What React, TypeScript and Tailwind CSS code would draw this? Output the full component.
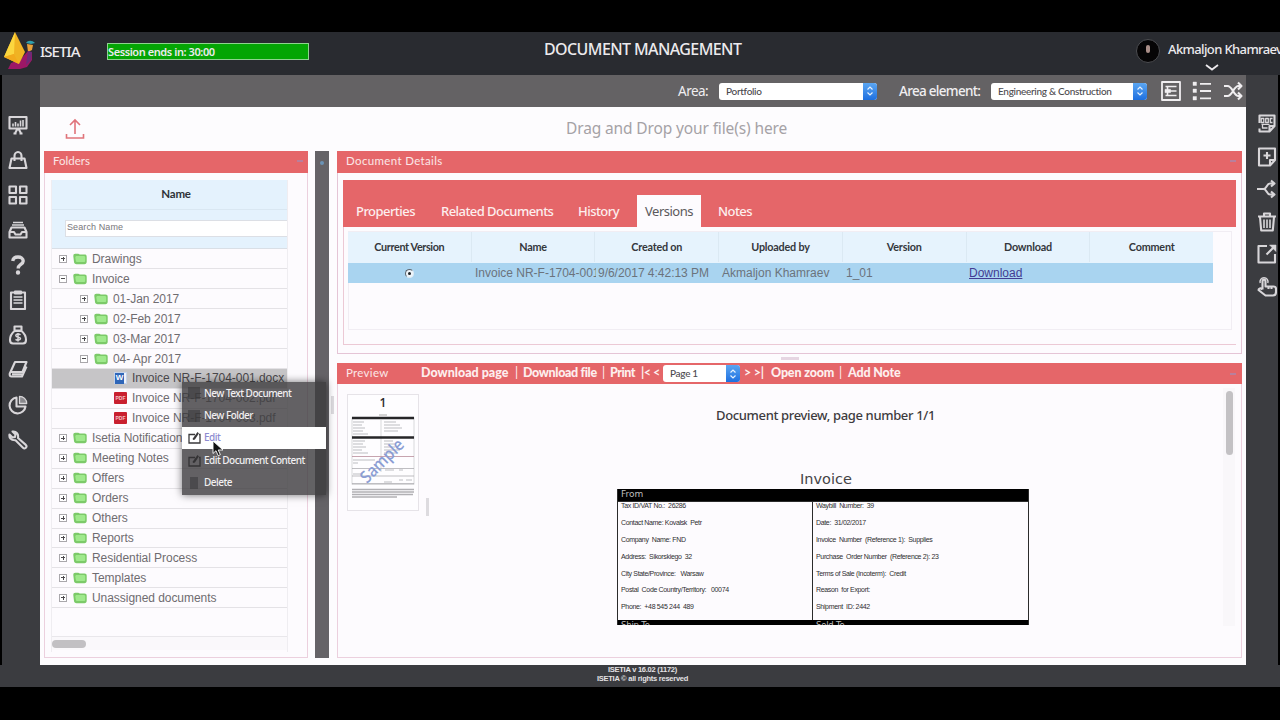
import React from 'react';
import clsx from 'clsx';

interface TreeNode {
  label: string;
  level: 0 | 1 | 2;
  kind: 'folder' | 'doc' | 'pdf';
  open?: boolean;
  selected?: boolean;
}

const tree: TreeNode[] = [
  { label: 'Drawings', level: 0, kind: 'folder' },
  { label: 'Invoice', level: 0, kind: 'folder', open: true },
  { label: '01-Jan 2017', level: 1, kind: 'folder' },
  { label: '02-Feb 2017', level: 1, kind: 'folder' },
  { label: '03-Mar 2017', level: 1, kind: 'folder' },
  { label: '04- Apr 2017', level: 1, kind: 'folder', open: true },
  { label: 'Invoice NR-F-1704-001.docx', level: 2, kind: 'doc', selected: true },
  { label: 'Invoice NR-F-1704-002.pdf', level: 2, kind: 'pdf' },
  { label: 'Invoice NR-F-1704-003.pdf', level: 2, kind: 'pdf' },
  { label: 'Isetia Notifications', level: 0, kind: 'folder' },
  { label: 'Meeting Notes', level: 0, kind: 'folder' },
  { label: 'Offers', level: 0, kind: 'folder' },
  { label: 'Orders', level: 0, kind: 'folder' },
  { label: 'Others', level: 0, kind: 'folder' },
  { label: 'Reports', level: 0, kind: 'folder' },
  { label: 'Residential Process', level: 0, kind: 'folder' },
  { label: 'Templates', level: 0, kind: 'folder' },
  { label: 'Unassigned documents', level: 0, kind: 'folder' },
];

const fromLines = [
  'Tax ID/VAT No.:  26286',
  'Contact Name: Kovalsk  Petr',
  'Company  Name: FND',
  'Address:  Sikorskiego  32',
  'City State/Province:   Warsaw',
  'Postal  Code Country/Territory:   00074',
  'Phone:  +48 545 244  489',
];

const refLines = [
  'Waybill  Number:  39',
  'Date:  31/02/2017',
  'Invoice  Number  (Reference 1):  Supplies',
  'Purchase  Order Number  (Reference 2): 23',
  'Terms of Sale (Incoterm):  Credit',
  'Reason  for Export:',
  'Shipment  ID: 2442',
];

function Icon({ children, className }: { children: React.ReactNode; className?: string }) {
  return (
    <svg
      viewBox="0 0 20 20"
      className={clsx('h-5 w-5 shrink-0', className)}
      fill="none"
      stroke="currentColor"
      strokeWidth={2.1}
      strokeLinejoin="round"
    >
      {children}
    </svg>
  );
}

const leftIcons = [
  // presentation
  <Icon key="board">
    <path d="M1.5 2h17v11.5h-17zM7 18.5l2-4h2l2 4M5.5 18.5h3M11.5 18.5h3" />
    <path d="M5 11.5V8.5M7.5 11.5V7M10 11.5V8.5M12.5 11.5V5.5M15 11.5V5" strokeWidth={1.6} />
  </Icon>,
  // bag
  <Icon key="bag">
    <path d="M3.5 8.5h13l2 9.5h-17zM6.5 11V6a3.5 4 0 0 1 7 0v5" />
  </Icon>,
  // tiles
  <Icon key="tiles">
    <path d="M1.5 1.5h6.5v6.5h-6.5zM12 1.5h6.5v6.5H12zM1.5 12h6.5v6.5h-6.5zM12 12h6.5v6.5H12z" />
  </Icon>,
  // inbox
  <Icon key="inbox">
    <path d="M5 2.5h10M4 5h12" strokeWidth={1.5} />
    <path d="M3.5 7.5h13l2 4.5v5.5h-17V12zM1.5 12H6l1.5 2.500h5L14 12h4.500" />
  </Icon>,
  // help
  <Icon key="help">
    <path d="M4.800 6c.2-2.700 2.300-4 5.200-4s5.200 1.500 5.200 4c0 3.600-5 3.400-5 7.500" strokeWidth={3.4} />
    <circle cx="10" cy="17.5" r="1.2" strokeWidth={2} fill="currentColor" />
  </Icon>,
  // clipboard
  <Icon key="clip">
    <path d="M3 2.5h14V19H3zM7 1.5h6v2H7z" />
    <path d="M5.5 7h9M5.5 10h9M5.5 13h9" strokeWidth={1.5} />
  </Icon>,
  // money bag
  <Icon key="money">
    <path d="M6.5 1.5h7v4h-7zM6.5 6C4 8 2 11 2 15c0 2.5 1 3.5 3 3.5h10c2 0 3-1 3-3.5 0-4-2-7-4.5-9z" />
    <path d="M12.5 9.800C11 8.600 7.800 8.800 7.800 10.600c0 2 4.700 1.100 4.700 3 0 1.800-3.300 2-5 .7M10 8v8.500" strokeWidth={1.5} />
  </Icon>,
  // book
  <Icon key="book">
    <path d="M7 2h11.500l-4 10H2.500zM2.500 12c-1.500 2-1 4.500.8 4.500h10.700l4.500-10M4 14.300h10" />
  </Icon>,
  // pie
  <Icon key="pie">
    <path d="M8.500 2.500a8 8 0 1 0 9 9h-9z" />
    <path d="M11.500 1.300v7.200h7.200a7.200 7.200 0 0 0-7.200-7.200z" fill="currentColor" fillOpacity={0.5} strokeWidth={1.3} />
  </Icon>,
  // wrench
  <Icon key="wrench">
    <path d="M4.500 1.500l3 3-.5 2.500-2.500.5-3-3C1 7.500 2.500 10.500 7.500 10.300l7.500 7.500c1 1 2.300.8 3-.1s.6-2-.2-2.800L10 8c.7-4-1.500-7-5.500-6.500z" />
  </Icon>,
];

const rightIcons = [
  // doc export
  <Icon key="doc">
    <path d="M2.500 9V1.500h15V12l-5 5.500h-10v-3M17 12h-4.500v5" />
    <path d="M4.200 4.500h2.600v4H4.200zM8.700 4.500h2.600v4H8.700zM15.500 4.500h-2.200v4h2.200" strokeWidth={1.3} />
    <path d="M4.500 10.300h8M5.500 11v3h5" strokeWidth={1.3} />
  </Icon>,
  // new page
  <Icon key="new">
    <path d="M2 1.5h16V13l-5 5.500H2zM17.500 13H13v5" />
    <path d="M10 5v7M6.500 8.500h7" />
  </Icon>,
  // share
  <Icon key="share">
    <path d="M0 10h6.500c3.500 0 3-5.500 6.500-5.500h4M6.500 10c3.500 0 3 5.500 6.500 5.500h4M14 1.500l3.500 3-3.500 3M14 12.500l3.500 3-3.500 3" />
  </Icon>,
  // trash
  <Icon key="trash">
    <path d="M1 4.500h18M7 4V1.500h6V4M3 5l1.200 13.500h11.600L17 5" />
    <path d="M7 7.500v8.500M10 7.500v8.500M13 7.500v8.500" strokeWidth={1.6} />
  </Icon>,
  // open external
  <Icon key="ext">
    <path d="M10 2H1.500v16.500H18V10M9.500 10.500l7-7" />
    <path d="M12.500 1h6.500v6.500z" fill="currentColor" strokeWidth={0.5} />
  </Icon>,
  // hand
  <Icon key="hand">
    <path d="M5.500 12.500V4.500c0-2.500 3-2.500 3 0v5h8c1.500 0 2.500 1 2.500 2.500v3c0 2-1 3.500-3 3.500H8.500L1.500 13c0-1.500 2-2.500 4-.5M11.500 10v2M14.500 10v2" />
    <path d="M3.200 6a4 4 0 1 1 7.600 0" strokeWidth={1.5} />
  </Icon>,
];

function FolderIcon() {
  return (
    <svg viewBox="0 0 14 12" className="h-3 w-3.5 shrink-0">
      <path d="M.3 3C.3 1.500 1 .8 2.300.8h3L6.800 1.600h4.700c1.500 0 2.200.8 2.200 2.200v5c0 1.500-.8 2.400-2.300 2.400H3.500C2 11.200 1.200 10.300 1 9z" fill="#7cca69" />
      <path d="M2.300 4.500c0-1 .6-1.500 1.500-1.500h6.900c1 0 1.500.6 1.500 1.500v3c0 1-.5 1.500-1.500 1.500H4.500c-1 0-1.500-.5-1.700-1.500z" fill="#9fe98c" />
    </svg>
  );
}

function FileIcon({ kind }: { kind: 'doc' | 'pdf' }) {
  if (kind === 'pdf') {
    return (
      <span className="flex h-3 w-[13px] shrink-0 items-center justify-center rounded-[1px] bg-[#c9202f] font-['Liberation_Sans',sans-serif] text-[5px] font-bold text-[#f3c3c6]">
        PDF
      </span>
    );
  }
  return (
    <span className="flex h-3 w-[13px] shrink-0 items-center border border-[#c5d3ea] bg-[#eef3fb]">
      <span className="flex h-[11px] w-[9px] items-center justify-center bg-[#2f66b8] font-['Liberation_Sans',sans-serif] text-[8px] font-bold text-white">
        W
      </span>
    </span>
  );
}

function TreeRow({ node }: { node: TreeNode }) {
  return (
    <div
      className={clsx(
        'flex h-[19.94px] shrink-0 items-center border-b border-[#e4e2e6]',
        node.level === 0 && 'pl-[7px]',
        node.level === 1 && 'pl-[28px]',
        node.level === 2 && 'pl-[62px]',
        node.selected && 'bg-[#c6c5c7]',
      )}
    >
      {node.kind === 'folder' ? (
        <>
          <span className="relative flex h-2 w-2 shrink-0 items-center justify-center border border-[#a9a7ab] bg-white">
            <span className="h-px w-1 bg-[#4b494d]" />
            {!node.open && <span className="absolute h-1 w-px bg-[#4b494d]" />}
          </span>
          <span className="ml-[6px] mr-[5px] flex">
            <FolderIcon />
          </span>
        </>
      ) : (
        <span className="mr-[5px] flex">
          <FileIcon kind={node.kind} />
        </span>
      )}
      <span
        className={clsx(
          "font-['Liberation_Sans',sans-serif] text-[12px] leading-none tracking-[-0.05px] whitespace-nowrap",
          node.selected ? 'text-[#4a484b]' : 'text-[#6f6c70]',
        )}
      >
        {node.label}
      </span>
    </div>
  );
}

function Select({ value, className }: { value: string; className: string }) {
  return (
    <div className={clsx('flex h-[17px] shrink-0 items-center overflow-hidden rounded-[3px] bg-white', className)}>
      <span className="flex-1 pl-[7px] font-['Lato',sans-serif] text-[10px] font-medium tracking-[-0.3px] whitespace-nowrap text-[#4c4a4d]">
        {value}
      </span>
      <span className="flex h-full w-[14px] items-center justify-center bg-gradient-to-b from-[#5ba6f2] to-[#1c6fe0]">
        <svg viewBox="0 0 8 12" className="h-3 w-2" fill="none" stroke="#e6f1fd" strokeWidth={1.2}>
          <path d="M1.500 4.500L4 2l2.500 2.500M1.500 7.500L4 10l2.500-2.500" />
        </svg>
      </span>
    </div>
  );
}

function Logo() {
  return (
    <svg viewBox="0 0 34 40" className="h-10 w-[34px] shrink-0">
      <path d="M24 11c2-3 6-3 9 0l-4 1z" fill="#2f9fae" />
      <path d="M25 12l6 1-1 5-4 2z" fill="#e9a23a" />
      <path d="M6 37l3-6 9-3 8-9 4 2v7l-5 7-7 2z" fill="#9c1766" />
      <path d="M26 19l4 1-1 8-5 5z" fill="#6d2a78" />
      <path d="M13 0l10 20-6 12L2 25z" fill="#f0b323" />
      <path d="M13 0L12 22 2 25z" fill="#fbd63f" />
      <path d="M2 25l10-3 5 10z" fill="#f2aa1c" />
    </svg>
  );
}

function Header() {
  return (
    <header className="flex h-[43px] shrink-0 items-start overflow-hidden bg-[#292b30] font-['Noto_Sans',sans-serif] text-[#eceaed]">
      <div className="flex w-[107px] shrink-0 items-start">
        <span className="ml-[2px]">
          <Logo />
        </span>
        <span className="ml-[4px] mt-[12px] text-[15px] leading-none font-medium tracking-[-1px]">ISETIA</span>
      </div>
      <div className="mt-[11px] flex h-[17px] w-[202px] shrink-0 items-center border border-[#8fd28f] bg-[#04a504] text-[11px] font-semibold leading-none tracking-[-0.42px] whitespace-nowrap">
        Session ends in: 30:00
      </div>
      <div className="ml-[235px] mt-[8px] w-[592px] shrink-0 text-[16px] leading-[18px] font-medium tracking-[-0.6px] whitespace-nowrap">
        DOCUMENT MANAGEMENT
      </div>
      <div className="mt-[7px] flex h-6 w-6 shrink-0 items-center justify-center rounded-full border border-[#4d4e52] bg-[#060506]">
        <span className="mb-1 h-2 w-1 rounded-full bg-[#a98e88]" />
      </div>
      <div className="ml-[8px] mt-[9px] flex w-[112px] shrink-0 flex-col">
        <span className="text-[13px] leading-[17px] font-medium tracking-[-0.62px] whitespace-nowrap">Akmaljon Khamraev</span>
        <svg viewBox="0 0 14 7" className="ml-[37px] mt-[6px] h-[7px] w-3.5" fill="none" stroke="#eceaed" strokeWidth={1.8}>
          <path d="M1 1l6 4.500L13 1" />
        </svg>
      </div>
    </header>
  );
}

function Toolbar() {
  return (
    <div className="flex h-8 shrink-0 items-center bg-[#646264] font-['Noto_Sans',sans-serif] text-[13.5px] text-[#f0eef0]">
      <span className="ml-[638px] w-[41px] tracking-[-0.5px]">Area:</span>
      <Select value="Portfolio" className="w-[158px]" />
      <span className="ml-[22px] w-[92px] font-medium tracking-[-0.7px] whitespace-nowrap">Area element:</span>
      <Select value="Engineering & Construction" className="w-[156px]" />
      <Icon className="ml-[14px]">
        <path d="M1 1h18v18H1z" strokeWidth={1.8} />
        <path d="M4.500 5.500h11M4.500 14.500h11M9 10h6.500M6.500 5v10" strokeWidth={1.6} />
        <path d="M4 8.300h5.500v3.400H4z" fill="currentColor" strokeWidth={0.5} />
      </Icon>
      <Icon className="ml-[11px]">
        <path d="M1 1h3.500v3.500H1zM1 8h3.500v3.500H1zM1 15.500h3.500V19H1z" fill="currentColor" strokeWidth={0.4} />
        <path d="M8 2.800h11M8 10h11M8 17.300h11" strokeWidth={1.8} />
      </Icon>
      <Icon className="ml-[11px]">
        <path d="M1 5h3.500c5 0 6 10 11 10H18M1 15h3.500c5 0 6-10 11-10H18M15 1.500L18.500 5 15 8.500M15 11.500l3.500 3.500-3.500 3.500" />
      </Icon>
    </div>
  );
}

function FoldersPanel() {
  return (
    <section className="flex w-[264px] shrink-0 flex-col border border-[#ecd0de] border-t-0 bg-[#fdfbfe]">
      <div className="-mx-px flex h-[22px] shrink-0 items-center justify-between bg-[#e56669] pb-[2px] pl-[9px] pr-[5px] font-['Lato',sans-serif] text-[11.5px] text-[#fbe6e7]">
        Folders
        <span className="h-0.5 w-1.5 bg-[#b97f9c]" />
      </div>
      <div className="ml-[6px] mt-[7px] flex h-[472px] w-[237px] flex-col overflow-hidden border-x border-[#efedf1]">
        <div className="flex h-[30px] shrink-0 items-center justify-center border-b border-[#d9e7f2] bg-[#e4f2fd] pb-[2px] pl-[13px] font-['Lato',sans-serif] text-[11.5px] font-bold tracking-[-0.2px] text-[#2e3238]">
          Name
        </div>
        <div className="flex h-[39px] shrink-0 items-center border-b border-[#d9dfe6] bg-[#e4f2fd] pb-[2px] pl-[13px]">
          <div className="flex h-[17px] w-full items-center border border-r-0 border-[#dcdfe5] bg-white pl-px font-['Liberation_Sans',sans-serif] text-[9px] tracking-[0.1px] text-[#77757a]">
            Search Name
          </div>
        </div>
        <div className="flex shrink-0 flex-col pt-[0.4px]">
          {tree.map((node) => (
            <TreeRow key={node.label} node={node} />
          ))}
        </div>
        <div className="mt-auto mb-[2px] flex h-[14px] items-center border-t border-[#e9e7eb] bg-[#faf8fb]">
          <span className="h-2 w-[34px] rounded-full bg-[#c2c0c3]" />
        </div>
      </div>
    </section>
  );
}

const tabs = [
  { label: 'Properties', cls: 'w-[85px]' },
  { label: 'Related Documents', cls: 'w-[137px]' },
  { label: 'History', cls: 'w-[59px]' },
  { label: 'Versions', cls: 'w-[64px]', active: true },
  { label: 'Notes', cls: 'w-[60px] ml-[17px]' },
];

const columns = ['Current Version', 'Name', 'Created on', 'Uploaded by', 'Version', 'Download', 'Comment'];

function DetailsPanel() {
  return (
    <section className="flex h-[203px] shrink-0 flex-col border border-t-0 border-[#e5c5d6] bg-[#fdfbfe]">
      <div className="-mx-px flex h-[22px] shrink-0 items-center justify-between bg-[#e56669] pb-[2px] pl-[9px] pr-[6px] font-['Lato',sans-serif] text-[11.5px] tracking-[0.35px] text-[#fbe6e7]">
        Document Details
        <span className="h-0.5 w-1.5 bg-[#b97f9c]" />
      </div>
      <div className="mx-[5px] mt-[7px] flex h-[165px] flex-col border border-t-0 border-r-0 border-[#ecc9d5]">
        <div className="-ml-px flex h-[47px] shrink-0 items-end bg-[#e56669] pl-[13px] font-['Noto_Sans',sans-serif] text-[13px] font-medium tracking-[-0.55px] text-[#fdeeee]">
          {tabs.map((tab) => (
            <span
              key={tab.label}
              className={clsx(
                'flex h-8 shrink-0 items-center whitespace-nowrap pt-px',
                tab.cls,
                tab.active && 'justify-center bg-[#fdfbfe] font-normal tracking-[-0.5px] text-[#5b595c]',
              )}
            >
              {tab.label}
            </span>
          ))}
        </div>
        <div className="ml-[4px] mr-[4px] mt-[4px] flex h-[99px] flex-col border border-[#f1edf3]">
          <div className="-ml-px flex h-[31px] w-[865px] shrink-0 bg-[#e6f3fd] pb-px font-['Lato',sans-serif] text-[10.8px] font-bold tracking-[-0.2px] text-[#34373c]">
            {columns.map((name) => (
              <span
                key={name}
                className={clsx(
                  'flex flex-1 items-center justify-center border-r border-[#dbe9f3] last:border-r-0',
                  name === 'Current Version' && 'tracking-[-0.35px]',
                )}
              >
                {name}
              </span>
            ))}
          </div>
          <div className="-ml-px flex h-5 w-[865px] shrink-0 items-center bg-[#a9d4f0] font-['Liberation_Sans',sans-serif] text-[12px] text-[#6b737c]">
            <span className="flex w-[127px] shrink-0 justify-center pr-[4px]">
              <span className="flex h-[9px] w-[9px] items-center justify-center rounded-full border border-[#5c6670] border-r-[#dceaf4] border-b-[#dceaf4] bg-[#eef5fa]">
                <span className="h-[3px] w-[3px] rounded-full bg-[#1d2227]" />
              </span>
            </span>
            <span className="w-[121px] shrink-0 overflow-hidden tracking-[-0.01px] whitespace-nowrap">Invoice NR-F-1704-001</span>
            <span className="ml-[2px] w-[124px] shrink-0 tracking-[-0.02px] whitespace-nowrap">9/6/2017 4:42:13 PM</span>
            <span className="w-[124px] shrink-0 whitespace-nowrap">Akmaljon Khamraev</span>
            <span className="w-[123px] shrink-0">1_01</span>
            <span className="text-[#433c93] underline">Download</span>
          </div>
        </div>
      </div>
    </section>
  );
}

function Thumbnail() {
  return (
    <div className="flex h-[117px] w-[72px] shrink-0 flex-col items-center border border-[#e6e3e8] bg-[#fefdff]">
      <span className="mt-px font-['Open_Sans',sans-serif] text-[12px] font-semibold leading-[14px] text-[#2b2a2c]">1</span>
      <svg viewBox="0 0 64 90" className="mt-[3px] h-[90px] w-16">
        <path d="M28 2h8" stroke="#aaa" />
        <path d="M1 4.500h62v67H1zM30 7v52" stroke="#c9c8cc" strokeWidth={0.7} fill="none" />
        <path d="M1 5h62M1 24.500h62" stroke="#262628" strokeWidth={2.4} />
        <path d="M2 9h11M2 12h9M2 15h12M2 18h10M2 21h15M33 9h12M33 12h16M33 15h18M33 18h14M2 28h12M2 31h10M2 34h13M2 37h9M2 40h15M33 28h9M33 31h12M33 34h11M33 37h16M33 40h13M2 47h22M2 50h5M34 57h9M2 61h10M48 57h4M48 67h4M55 67h6M33 69h8" stroke="#b6b5ba" strokeWidth={0.9} />
        <path d="M1 43.500h62" stroke="#b98d9b" strokeWidth={0.8} />
        <path d="M1 55.500h62M1 63h62M1 70.500h62" stroke="#a3a2a7" strokeWidth={0.7} />
        <path d="M1 76.500h62M1 79h62M1 81.500h61M1 84h45" stroke="#b1b0b4" strokeWidth={1.5} />
        <text
          x="0"
          y="0"
          transform="translate(16 71) rotate(-45)"
          fontFamily="Open Sans, sans-serif"
          fontSize="17"
          fontWeight="600"
          fill="#8b9dd4"
          textLength="54"
          lengthAdjust="spacingAndGlyphs"
        >
          Sample
        </text>
      </svg>
    </div>
  );
}

function InvoiceColumn({ lines, className }: { lines: string[]; className: string }) {
  return (
    <div className={clsx('flex flex-col overflow-hidden pl-[3px]', className)}>
      <div className="-mt-[4px] flex flex-col">
        {lines.map((line) => (
          <span key={line} className="h-[16.9px] leading-[16.9px] whitespace-pre">
            {line}
          </span>
        ))}
      </div>
    </div>
  );
}

function PreviewPanel() {
  return (
    <section className="flex h-[295px] shrink-0 flex-col border border-t-0 border-[#ecd0de] bg-[#fdfbfe]">
      <div className="-mx-px flex h-[21px] shrink-0 items-center bg-[#e56669] pl-[9px] pr-[6px] font-['Lato',sans-serif] text-[12.5px] font-black tracking-[-0.15px] text-[#fdeeee]">
        <span className="w-[75px] shrink-0 pb-px text-[11.5px] font-normal tracking-[0.3px] text-[#fbe6e7]">Preview</span>
        <span className="w-[94px] shrink-0 tracking-[0px] whitespace-nowrap">Download page</span>
        <span className="w-[8px] shrink-0 font-normal">|</span>
        <span className="w-[79px] shrink-0 tracking-[-0.35px] whitespace-nowrap">Download file</span>
        <span className="w-[8px] shrink-0 font-normal">|</span>
        <span className="w-[31px] shrink-0 tracking-[-0.5px]">Print</span>
        <span className="w-[22px] shrink-0 font-bold tracking-[-0.5px] whitespace-nowrap">|&lt; &lt;</span>
        <Select value="Page 1" className="w-[77px]" />
        <span className="ml-[4px] w-[27px] shrink-0 font-bold tracking-[-0.3px] whitespace-nowrap">&gt; &gt;|</span>
        <span className="w-[68px] shrink-0 whitespace-nowrap">Open zoom</span>
        <span className="w-[9px] shrink-0 font-normal">|</span>
        <span className="whitespace-nowrap">Add Note</span>
        <span className="ml-auto h-0.5 w-1.5 bg-[#b97f9c]" />
      </div>
      <div className="flex flex-1 items-start pl-[9px]">
        <div className="mt-[10px] flex">
          <Thumbnail />
        </div>
        <span className="ml-[7px] mt-[114px] h-[18px] w-[3px] bg-[#dddbdf]" />
        <div className="ml-[188px] mt-[22px] flex w-[412px] flex-col">
          <div className="pl-[99px] font-['Noto_Sans',sans-serif] text-[13px] font-medium leading-[18px] tracking-[-0.35px] whitespace-nowrap text-[#3d3b3e]">
            Document preview, page number 1/1
          </div>
          <div className="mt-[46px] pl-[183px] font-['DejaVu_Sans',sans-serif] text-[14.5px] leading-[18px] text-[#454346]">
            Invoice
          </div>
          <div className="mt-px flex h-[136px] w-[412px] flex-col overflow-hidden border-x border-[#2b2b2b] font-['Liberation_Sans',sans-serif] text-[7px] tracking-[-0.34px] text-[#2f2e31]">
            <div className="flex h-[12px] shrink-0 items-center bg-black pl-[3px] font-['DejaVu_Sans',sans-serif] text-[9px] tracking-normal text-[#bfbfbf]">
              From
            </div>
            <div className="flex h-[119px] shrink-0 border-t border-[#2b2b2b]">
              <InvoiceColumn lines={fromLines} className="w-[195px] border-r border-[#2b2b2b]" />
              <InvoiceColumn lines={refLines} className="flex-1" />
            </div>
            <div className="flex h-[5px] shrink-0 overflow-hidden bg-black pl-[3px] font-['DejaVu_Sans',sans-serif] text-[8.5px] leading-[10px] tracking-[-0.2px] text-[#bfbfbf]">
              <span className="w-[195px]">Ship To</span>
              <span>Sold To</span>
            </div>
          </div>
        </div>
        <div className="ml-auto mr-[6px] mt-[4px] flex h-[238px] w-[12px] justify-center bg-[#f9f7fa] pt-[3px]">
          <span className="h-[64px] w-[7px] rounded-full bg-[#c3c1c4]" />
        </div>
      </div>
    </section>
  );
}

const menuItems = ['New Text Document', 'New Folder', 'Edit', 'Edit Document Content', 'Delete'];

function ContextMenu() {
  return (
    <div className="absolute left-[182px] top-[382px] flex h-[113px] w-[144px] flex-col bg-[#3c3b3d]/80 font-['Noto_Sans',sans-serif] text-[10px] font-medium tracking-[-0.52px] text-[#f1eff1] shadow-[0_0_8px_rgba(0,0,0,0.55)]">
      {menuItems.map((item, i) => (
        <div
          key={item}
          className={clsx('flex h-[22.4px] items-center whitespace-nowrap', item === 'Edit' && 'bg-white text-[#8d8bd0]')}
        >
          <span className={clsx('ml-[6px] mr-[3px] flex w-[13px]', item === 'Edit' ? 'text-[#3a393b]' : 'text-[#343335]')}>
            {item.startsWith('Edit') ? (
              <svg viewBox="0 0 13 13" className="h-[13px] w-[13px]" fill="none" stroke="currentColor" strokeWidth={1.3}>
                <path d="M7 3.500H1v8.500h11V3.500h-1M5 8.500l5-7M5 8.500l1.500-.5 4-6" />
              </svg>
            ) : (
              <span className={clsx('h-3 bg-current opacity-50', i === 4 ? 'ml-[2px] w-[8px]' : 'w-[12px]')} />
            )}
          </span>
          {item}
        </div>
      ))}
      <svg viewBox="0 0 12 17" className="absolute left-[30px] top-[58px] h-[17px] w-3">
        <path d="M1 1v12.500l3-2.800 2.200 5 2.200-1-2.200-4.700H11z" fill="#111" stroke="#fff" strokeWidth={0.9} />
      </svg>
    </div>
  );
}

export default function App() {
  return (
    <div className="relative flex h-[720px] w-[1280px] flex-col overflow-hidden bg-black pt-8">
      <Header />
      <div className="flex h-[590px] shrink-0 bg-[#3b3c40]">
        <nav className="flex w-10 shrink-0 flex-col items-center border-l-2 border-black pt-[40px] pr-[6px] text-[#d8d6d9]">
          {leftIcons.map((icon, i) => (
            <span key={i} className="flex h-[35.05px] shrink-0 items-start">
              {icon}
            </span>
          ))}
        </nav>
        <main className="flex w-[1206px] shrink-0 flex-col bg-[#fdfcfe]">
          <Toolbar />
          <div className="flex h-[44px] shrink-0 items-center">
            <svg viewBox="0 0 20 22" className="ml-[25px] mb-px h-[22px] w-5 shrink-0" fill="none" stroke="#e0747b" strokeWidth={1.6}>
              <path d="M10 16V2M5 7l5-5 5 5M1.500 16v4h17v-4" />
            </svg>
            <span className="ml-[481px] font-['Noto_Sans',sans-serif] text-[15.5px] tracking-[-0.13px] whitespace-nowrap text-[#a5a2a6]">
              Drag and Drop your file(s) here
            </span>
          </div>
          <div className="flex h-[507px] shrink-0 pl-[4px]">
            <FoldersPanel />
            <div className="ml-[7px] flex w-[14px] shrink-0 justify-center bg-[#656367] pt-[10px]">
              <span className="h-1 w-1 rounded-full bg-[#6b93b5]" />
            </div>
            <div className="flex w-[12px] shrink-0 items-center pl-[2px]">
              <span className="h-[18px] w-[3px] bg-[#dddbdf]" />
            </div>
            <div className="-ml-[4px] flex w-[905px] shrink-0 flex-col">
              <DetailsPanel />
              <div className="flex h-[9px] shrink-0 items-center justify-center">
                <span className="h-[3px] w-[18px] bg-[#e6d6e2]" />
              </div>
              <PreviewPanel />
            </div>
          </div>
        </main>
        <aside className="flex w-[34px] shrink-0 flex-col items-end border-r-2 border-black pt-[39px] pr-px text-[#d8d6d9]">
          {rightIcons.map((icon, i) => (
            <span key={i} className="flex h-[32.6px] shrink-0 items-start">
              {icon}
            </span>
          ))}
        </aside>
      </div>
      <footer className="flex h-[22px] shrink-0 flex-col items-center bg-[#3b3c40] pt-px pl-[5px] font-['Liberation_Sans',sans-serif] text-[7.5px] font-bold leading-[8.5px] tracking-[-0.25px] text-[#e4e2e4]">
        <span>ISETIA v 16.02 (1172)</span>
        <span>ISETIA © all rights reserved</span>
      </footer>
      <ContextMenu />
    </div>
  );
}
